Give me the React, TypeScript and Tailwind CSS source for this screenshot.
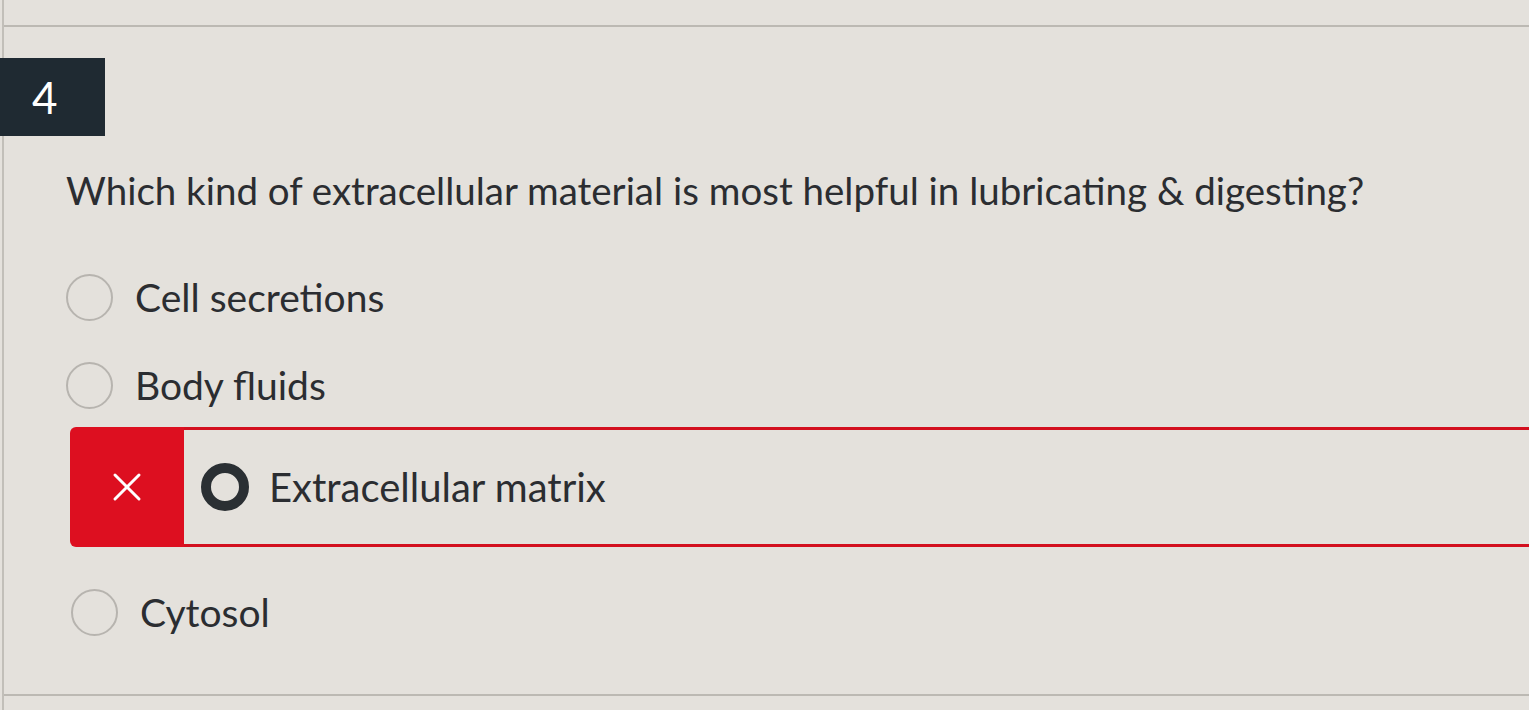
import { X } from 'lucide-react';

const options = [
  { label: 'Cell secretions', wrong: false },
  { label: 'Body fluids', wrong: false },
  { label: 'Extracellular matrix', wrong: true },
  { label: 'Cytosol', wrong: false },
];

function Radio({ checked }: { checked?: boolean }) {
  if (checked) {
    return <div className="w-[48px] h-[48px] rounded-full border-[10px] border-[#2a2f33] shrink-0" />;
  }
  return <div className="w-[47px] h-[47px] rounded-full border-2 border-[#b7b4af] shrink-0" />;
}

export default function App() {
  return (
    <div className="h-[710px] w-full overflow-hidden bg-[#e4e1dc] pl-[2px] font-['Lato',sans-serif] text-[#2b2d31]">
      <div className="h-full border-l-2 border-[#c2bfb9]">
        <div className="h-[25px]" />
        <div className="h-[671px] border-t-2 border-b-2 border-[#bcb9b3]">
          {/* question number */}
          <div className="mt-[31px] -ml-[4px] w-[105px] h-[78px] bg-[#1f2a32] flex items-center pl-[32px] text-[44px] text-white">
            4
          </div>

          {/* question */}
          <p className="mt-[32px] pl-[62px] text-[38.5px] leading-[44px]">
            Which kind of extracellular material is most helpful in lubricating &amp; digesting?
          </p>

          {/* answers */}
          <div className="mt-[55px]">
            {options.map((o, i) =>
              o.wrong ? (
                <div key={o.label} className="mt-[12px] ml-[66px] -mr-[10px] h-[120px] flex">
                  <div className="w-[114px] bg-[#dd0f20] rounded-l-[6px] flex items-center justify-center">
                    <X className="w-[48px] h-[48px] text-white" strokeWidth={1.5} />
                  </div>
                  <div className="flex-1 border-t-[3px] border-b-[3px] border-[#d3101f] flex items-center pl-[17px] gap-[20px] text-[40px]">
                    <Radio checked />
                    <span>{o.label}</span>
                  </div>
                </div>
              ) : (
                <div
                  key={o.label}
                  className={
                    'h-[60px] flex items-center gap-[22px] pl-[62px] text-[39px] ' +
                    (i === 0 ? '' : i === 1 ? 'mt-[28px]' : 'mt-[35px] pl-[67px]')
                  }
                >
                  <Radio />
                  <span>{o.label}</span>
                </div>
              )
            )}
          </div>
        </div>
      </div>
    </div>
  );
}
